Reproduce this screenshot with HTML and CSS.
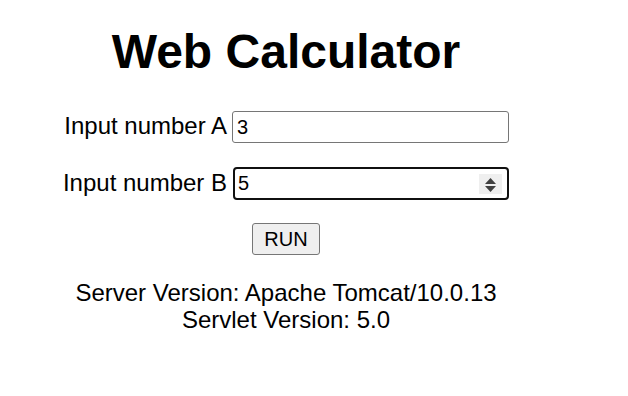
FILE: index.html
```html
<!DOCTYPE html>
<html>
<head>
<meta charset="utf-8">
<title>Web Calculator</title>
<link rel="stylesheet" href="styles.css">
</head>
<body>
<div class="page">
  <h1 class="title">Web Calculator</h1>
  <form class="calc">
    <div class="grid">
      <label class="label">Input number A</label>
      <div class="field"><span class="value">3</span></div>
      <label class="label">Input number B</label>
      <div class="field field-focus"><span class="value">5</span>
        <span class="spin"><svg width="23" height="20" viewBox="0 0 23 20"><path d="M6 10 L11.5 4 L17 10 Z" fill="#404040"/><path d="M6 12 L17 12 L11.5 18 Z" fill="#404040"/></svg></span>
      </div>
    </div>
    <div class="actions"><span class="btn">RUN</span></div>
  </form>
  <div class="info">
    <div>Server Version: Apache Tomcat/10.0.13</div>
    <div>Servlet Version: 5.0</div>
  </div>
</div>
</body>
</html>
```
FILE: styles.css
```css
html, body {
  margin: 0;
  padding: 0;
  background: #ffffff;
}
.page {
  width: 572px;
  padding-top: 24px;
  font-family: "Liberation Sans", Arial, sans-serif;
  font-size: 24px;
  color: #000;
  text-align: center;
}
.title {
  margin: 0;
  font-size: 48px;
  line-height: 56px;
  font-weight: bold;
}
.calc {
  margin: 31px 0 0 0;
}
.grid {
  display: grid;
  grid-template-columns: auto 277px;
  column-gap: 5px;
  row-gap: 24px;
  justify-content: center;
  align-items: center;
}
.label {
  text-align: right;
  line-height: 28px;
  margin-top: -2px;
}
.field {
  box-sizing: border-box;
  height: 32px;
  display: flex;
  align-items: center;
  border: 1px solid #767676;
  border-radius: 3px;
  padding: 0 5px 0 4px;
  font-size: 20px;
  text-align: left;
  background: #fff;
}
.field-focus {
  border: 2px solid #101010;
  border-radius: 4px;
  height: 33px;
  margin-left: 1px;
  padding-left: 3px;
}
.value {
  flex: 1;
}
.spin {
  display: flex;
  width: 23px;
  height: 20px;
  background: #efefef;
}
.actions {
  display: flex;
  justify-content: center;
  margin-top: 23px;
}
.btn {
  box-sizing: border-box;
  width: 68px;
  height: 32px;
  display: flex;
  align-items: center;
  justify-content: center;
  background: #efefef;
  border: 1px solid #767676;
  border-radius: 3px;
  font-size: 20px;
}
.info {
  margin-top: 24px;
  line-height: 27px;
}
```
